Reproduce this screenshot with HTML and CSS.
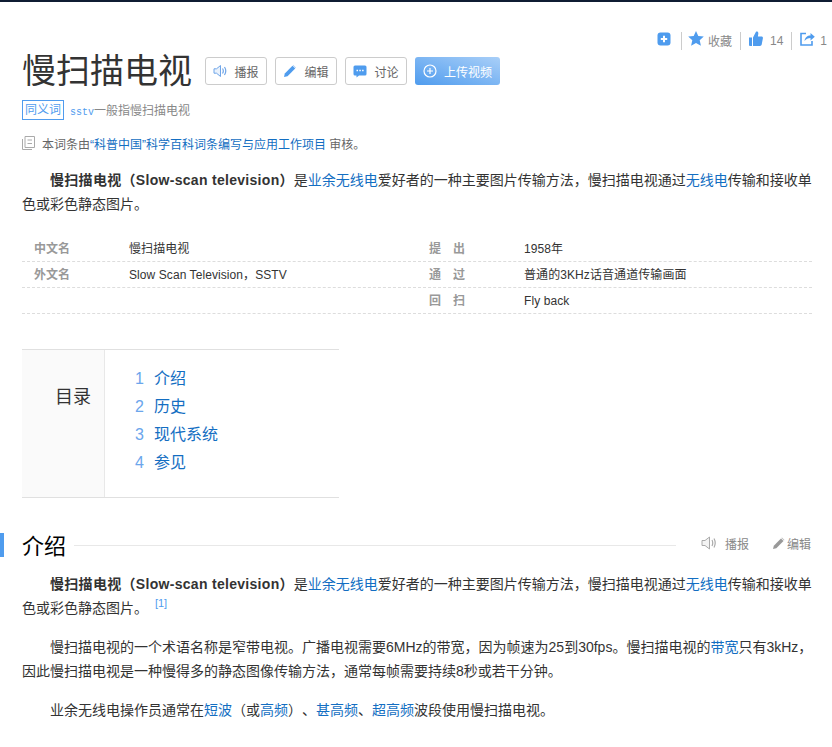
FILE: index.html
```html
<!DOCTYPE html>
<html lang="zh-CN">
<head>
    <meta charset="UTF-8">
    <title>慢扫描电视</title>
    <link rel="stylesheet" href="styles.css">
</head>
<body>
    <div class="topbar"></div>
    <div class="content">
        <div class="share">
            <span class="share-item share-add">
                <svg class="ico" width="14" height="14" viewBox="0 0 14 14"><rect x="0.5" y="0.5" width="13" height="13" rx="3" fill="#4f9cee"/><path d="M7 3.800v6.400M3.800 7h6.400" stroke="#fff" stroke-width="2"/></svg>
            </span>
            <span class="share-item share-star">
                <svg class="ico" width="16" height="15" viewBox="0 0 16 15"><path d="M8 0l2.300 5 5.500.6-4.100 3.700 1.200 5.400L8 12l-4.900 2.700 1.200-5.400L.2 5.600l5.500-.6z" fill="#4f9cee"/></svg>
                <span class="share-text">收藏</span>
            </span>
            <span class="share-item share-like">
                <svg class="ico" width="14" height="15" viewBox="0 0 14 15"><path d="M0 6.500h3V15H1a1 1 0 0 1-1-1zM4 6.500L7 .8c1.500-.6 2.500.4 2.300 1.900L8.900 5.500h3.600c1 0 1.600.8 1.400 1.800l-1.200 6.300c-.2.900-.8 1.400-1.700 1.400H4z" fill="#4f9cee"/></svg>
                <span class="share-text">14</span>
            </span>
            <span class="share-item share-out">
                <svg class="ico" width="15" height="15" viewBox="0 0 15 15"><path d="M6 2.500H1v11.500h11v-4" fill="none" stroke="#4f9cee" stroke-width="1.600"/><path d="M4.500 10c.4-3.500 2.800-5.500 6-5.500V2l4.300 3.800-4.300 3.800V7c-2.500 0-4.500 1-6 3z" fill="#4f9cee"/></svg>
                <span class="share-text">1</span>
            </span>
        </div>

        <div class="title-row">
            <h1>慢扫描电视</h1>
            <a class="btn">
                <svg width="14" height="14" viewBox="0 0 14 14"><path d="M1 4.800h2.500L7.500 1.500v11L3.500 9.200H1z" fill="#eaf2fc" stroke="#6fa5e8"/><path d="M9.500 4.500c1 1.500 1 3.500 0 5M11.500 3c1.600 2.500 1.600 5.500 0 8" fill="none" stroke="#6fa5e8" stroke-width="1.200"/></svg>
                播报
            </a>
            <a class="btn">
                <svg width="14" height="14" viewBox="0 0 14 14"><path d="M1 13l.8-3.500L9.500 1.800l2.700 2.700-7.700 7.700z" fill="#4f9cee"/><path d="M10.300 1l2.700 2.700-.5.500-2.700-2.700z" fill="#9cc6f5"/></svg>
                编辑
            </a>
            <a class="btn">
                <svg width="14" height="14" viewBox="0 0 14 14"><path d="M2 1.500h10a1.500 1.500 0 0 1 1.500 1.500v7a1.500 1.500 0 0 1-1.500 1.500H6L3.500 13.500V11.500H2A1.500 1.500 0 0 1 .5 10V3A1.500 1.500 0 0 1 2 1.500z" fill="#4f9cee"/><path d="M3.500 6.500h1.500M6.300 6.500h1.500M9.100 6.500h1.500" stroke="#fff" stroke-width="1.500"/></svg>
                讨论
            </a>
            <a class="btn btn-upload">
                <svg width="14" height="14" viewBox="0 0 14 14"><circle cx="7" cy="7" r="6" fill="none" stroke="#fff" stroke-width="1.200"/><path d="M7 4v6M4 7h6" stroke="#fff" stroke-width="1.200"/></svg>
                上传视频
            </a>
        </div>

        <div class="synonym">
            <span class="tag">同义词</span>
            <span class="syn-text"><a class="syn-word">sstv</a>一般指慢扫描电视</span>
        </div>

        <div class="review">
            <svg width="13" height="14" viewBox="0 0 13 14"><path d="M3 .5h9.500v11H3zM.5 3v10.500H10" fill="none" stroke="#aaa"/><path d="M5.500 4h4.500M5.500 7.500h4.500" stroke="#aaa"/></svg>
            <span>本词条由<a>“科普中国”科学百科词条编写与应用工作项目</a> 审核。</span>
        </div>

        <p class="para intro"><b>慢扫描电视（Slow-scan television）</b>是<a>业余无线电</a>爱好者的一种主要图片传输方法，慢扫描电视通过<a>无线电</a>传输和接收单色或彩色静态图片。</p>

        <div class="basic-info">
            <div class="info-row"><span class="info-name">中文名</span><span class="info-value">慢扫描电视</span><span class="info-name">提　出</span><span class="info-value">1958年</span></div>
            <div class="info-row"><span class="info-name">外文名</span><span class="info-value">Slow Scan Television，SSTV</span><span class="info-name">通　过</span><span class="info-value">普通的3KHz话音通道传输画面</span></div>
            <div class="info-row"><span class="info-name"></span><span class="info-value"></span><span class="info-name">回　扫</span><span class="info-value">Fly back</span></div>
        </div>

        <div class="toc">
            <div class="toc-title">目录</div>
            <ol class="toc-list">
                <li><span class="toc-num">1</span><a>介绍</a></li>
                <li><span class="toc-num">2</span><a>历史</a></li>
                <li><span class="toc-num">3</span><a>现代系统</a></li>
                <li><span class="toc-num">4</span><a>参见</a></li>
            </ol>
        </div>

        <div class="section-head">
            <h2>介绍</h2>
            <div class="section-line"></div>
            <span class="section-tool">
                <svg width="16" height="14" viewBox="0 0 16 14"><path d="M1 4.500h3L8.500 1v12L4 9.500H1z" fill="#f3f3f3" stroke="#aaa"/><path d="M11 4c1 2 1 4 0 6M13 2.500c1.600 3 1.600 6 0 9" fill="none" stroke="#aaa" stroke-width="1.200"/></svg>
                <span class="tool-text">播报</span>
            </span>
            <span class="section-tool tool-edit">
                <svg width="12" height="12" viewBox="0 0 12 12"><path d="M0 12l.8-3.300L8 1.500l2.500 2.500-7.200 7.200z" fill="#999"/><path d="M9 .5L11.500 3l-.6.6L8.400 1.100z" fill="#bbb"/></svg>
                <span class="tool-text">编辑</span>
            </span>
        </div>

        <p class="para"><b>慢扫描电视（Slow-scan television）</b>是<a>业余无线电</a>爱好者的一种主要图片传输方法，慢扫描电视通过<a>无线电</a>传输和接收单色或彩色静态图片。 <sup class="ref">[1]</sup></p>
        <p class="para">慢扫描电视的一个术语名称是窄带电视。广播电视需要6MHz的带宽，因为帧速为25到30fps。慢扫描电视的<a>带宽</a>只有3kHz，因此慢扫描电视是一种慢得多的静态图像传输方法，通常每帧需要持续8秒或若干分钟。</p>
        <p class="para">业余无线电操作员通常在<a>短波</a>（或<a>高频</a>）、<a>甚高频</a>、<a>超高频</a>波段使用慢扫描电视。</p>
    </div>
</body>
</html>
```

FILE: styles.css
```css
* {
    box-sizing: border-box;
    margin: 0;
}
body {
    height: 747px;
    overflow: hidden;
    background-color: #fff;
    font-family: "Liberation Sans", Arial, "Noto Sans CJK SC", sans-serif;
    font-size: 12px;
    color: #333;
    text-spacing-trim: space-all;
}
a {
    color: #136ec2;
}
.topbar {
    height: 2px;
    background-color: #0f1c33;
}
.content {
    padding: 0 20px 0 22px;
}

/* share bar */
.share {
    display: flex;
    justify-content: flex-end;
    align-items: center;
    height: 20px;
    margin-top: 29px;
    margin-right: -20px;
}
.share-item {
    display: flex;
    align-items: center;
    height: 18px;
    padding: 0 8px;
    border-left: 1px solid #ccc;
}
.share-add {
    border-left: none;
    padding: 0 10px 0 0;
}
.share-star {
    padding-left: 6px;
}
.share-out {
    padding-right: 5px;
}
.share-text {
    margin-bottom: 1px;
    margin-left: 5px;
    color: #888;
}
.share-star .share-text {
    margin-left: 4px;
}
.share-like .share-text {
    margin-left: 7px;
}
.ico {
    display: block;
    margin-bottom: 5px;
}

/* title */
.title-row {
    display: flex;
    align-items: center;
    margin-top: -4px;
    height: 48px;
}
h1 {
    margin-right: 13px;
    font-size: 34px;
    font-weight: 400;
    line-height: 48px;
    color: #333;
}
.btn {
    display: flex;
    align-items: center;
    justify-content: center;
    gap: 7px;
    width: 62px;
    height: 28px;
    margin-right: 8px;
    border: 1px solid #ccc;
    border-radius: 3px;
    color: #666;
    font-size: 12px;
}
.btn-upload {
    width: 85px;
    border: none;
    background: linear-gradient(to top right, #4f9cee, #a9cff8);
    color: #fff;
}

/* synonym */
.synonym {
    display: flex;
    align-items: center;
    margin-top: 5px;
    height: 20px;
}
.tag {
    width: 42px;
    height: 20px;
    margin-right: 6px;
    border: 1px solid #4f9cee;
    color: #4f9cee;
    font-size: 12px;
    line-height: 18px;
    text-align: center;
}
.syn-text {
    padding-bottom: 2px;
    color: #888;
}
.syn-word {
    color: #4f9cee;
    font-family: "Liberation Mono", monospace;
    font-size: 10px;
}
.review {
    display: flex;
    align-items: center;
    gap: 7px;
    margin-top: 13px;
    height: 20px;
    color: #666;
}

/* paragraphs */
.para {
    margin-right: -2px;
    margin-bottom: 15px;
    font-size: 14px;
    line-height: 24px;
    text-indent: 28px;
    color: #333;
}
.para b {
    letter-spacing: 0.3px;
}
.intro {
    margin-top: 15px;
    margin-bottom: 20px;
}

/* basic info */
.info-row {
    display: grid;
    grid-template-columns: 107px 288px 107px 1fr;
    height: 26px;
    border-bottom: 1px dashed #ddd;
    line-height: 26px;
}
.info-name {
    padding-left: 12px;
    color: #999;
    font-weight: 700;
}
.info-value {
    letter-spacing: 0.08px;
}

/* toc */
.toc {
    display: flex;
    width: 317px;
    height: 149px;
    margin-top: 35px;
    border-top: 1px solid #e0e0e0;
    border-bottom: 1px solid #e0e0e0;
}
.toc-title {
    width: 83px;
    padding: 33px 13px 0 0;
    background-color: #fafafa;
    border-right: 1px solid #e8e8e8;
    font-size: 18px;
    line-height: 28px;
    text-align: right;
}
.toc-list {
    padding: 15px 0 0 30px;
    list-style: none;
}
.toc-list li {
    display: flex;
    height: 28px;
    font-size: 16px;
    line-height: 28px;
}
.toc-num {
    width: 19px;
    color: #6ba6ec;
}

/* section head */
.section-head {
    display: flex;
    align-items: center;
    position: relative;
    height: 24px;
    margin-top: 35px;
    margin-bottom: 15px;
}
.section-head::before {
    content: "";
    position: absolute;
    left: -22px;
    top: 0;
    width: 4px;
    height: 24px;
    background-color: #4f9cee;
}
h2 {
    margin-right: 8px;
    margin-bottom: 3px;
    font-size: 22px;
    font-weight: 400;
    color: #000;
}
.section-line {
    flex-grow: 1;
    height: 1px;
    background-color: #e8e8e8;
}
.section-tool {
    display: flex;
    align-items: center;
    margin-bottom: 4px;
    margin-left: 25px;
    margin-right: 1px;
    color: #888;
}
.tool-text {
    margin-left: 8px;
}
.tool-edit {
    margin-left: 23px;
}
.tool-edit .tool-text {
    margin-left: 2px;
}
.ref {
    margin-left: 3px;
    color: #4f9cee;
    font-size: 11px;
    line-height: 0;
}
```
